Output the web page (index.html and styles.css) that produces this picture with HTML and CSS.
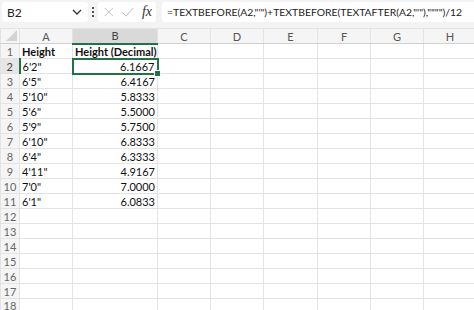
FILE: index.html
```html
<!DOCTYPE html>
<html lang="en">
<head>
    <meta charset="UTF-8">
    <title>Height to Decimal</title>
    <link rel="stylesheet" href="styles.css">
</head>
<body>

<!-- Formula Bar -->
<div class="formula-bar">
    <div class="name-box">
        <span class="name-text">B2</span>
        <svg class="chevron" width="10" height="6" viewBox="0 0 10 6"><path d="M1 1 L5 5 L9 1" fill="none" stroke="#333" stroke-width="1.3"/></svg>
    </div>
    <div class="dots"><span></span><span></span><span></span></div>
    <div class="fx-box">
        <svg width="14" height="14" viewBox="0 0 14 14"><path d="M2 2 L12 12 M12 2 L2 12" stroke="#bdbdbd" stroke-width="1.2"/></svg>
        <svg width="16" height="14" viewBox="0 0 16 14"><path d="M1 7 L6 12 L15 2" fill="none" stroke="#bdbdbd" stroke-width="1.2"/></svg>
        <span class="fx">fx</span>
    </div>
    <div class="formula-input">=TEXTBEFORE(A2,"'")+TEXTBEFORE(TEXTAFTER(A2,"'"),"""")/12</div>
</div>

<!-- Sheet -->
<table class="sheet">
    <colgroup>
        <col class="c-head"><col class="c-a"><col class="c-b"><col class="c-n"><col class="c-n"><col class="c-e"><col class="c-n"><col class="c-n"><col class="c-h">
    </colgroup>
    <tr class="col-heads">
        <th class="corner"><div class="tri"></div></th>
        <th>A</th><th class="sel">B</th><th>C</th><th>D</th><th>E</th><th>F</th><th>G</th><th>H</th>
    </tr>
    <tr><th>1</th><td class="bold">Height</td><td class="bold">Height (Decimal)</td><td></td><td></td><td></td><td></td><td></td><td></td></tr>
    <tr><th class="sel-row">2</th><td>6'2"</td><td class="num active">6.1667<span class="handle"></span></td><td></td><td></td><td></td><td></td><td></td><td></td></tr>
    <tr><th>3</th><td>6'5"</td><td class="num">6.4167</td><td></td><td></td><td></td><td></td><td></td><td></td></tr>
    <tr><th>4</th><td>5'10"</td><td class="num">5.8333</td><td></td><td></td><td></td><td></td><td></td><td></td></tr>
    <tr><th>5</th><td>5'6"</td><td class="num">5.5000</td><td></td><td></td><td></td><td></td><td></td><td></td></tr>
    <tr><th>6</th><td>5'9"</td><td class="num">5.7500</td><td></td><td></td><td></td><td></td><td></td><td></td></tr>
    <tr><th>7</th><td>6'10"</td><td class="num">6.8333</td><td></td><td></td><td></td><td></td><td></td><td></td></tr>
    <tr><th>8</th><td>6'4"</td><td class="num">6.3333</td><td></td><td></td><td></td><td></td><td></td><td></td></tr>
    <tr><th>9</th><td>4'11"</td><td class="num">4.9167</td><td></td><td></td><td></td><td></td><td></td><td></td></tr>
    <tr><th>10</th><td>7'0"</td><td class="num">7.0000</td><td></td><td></td><td></td><td></td><td></td><td></td></tr>
    <tr><th>11</th><td>6'1"</td><td class="num">6.0833</td><td></td><td></td><td></td><td></td><td></td><td></td></tr>
    <tr><th>12</th><td></td><td></td><td></td><td></td><td></td><td></td><td></td><td></td></tr>
    <tr><th>13</th><td></td><td></td><td></td><td></td><td></td><td></td><td></td><td></td></tr>
    <tr><th>14</th><td></td><td></td><td></td><td></td><td></td><td></td><td></td><td></td></tr>
    <tr><th>15</th><td></td><td></td><td></td><td></td><td></td><td></td><td></td><td></td></tr>
    <tr><th>16</th><td></td><td></td><td></td><td></td><td></td><td></td><td></td><td></td></tr>
    <tr><th>17</th><td></td><td></td><td></td><td></td><td></td><td></td><td></td><td></td></tr>
    <tr class="last"><th>18</th><td></td><td></td><td></td><td></td><td></td><td></td><td></td><td></td></tr>
</table>

</body>
</html>
```

FILE: styles.css
```css
body {
    margin: 0;
    padding: 0;
    font-family: Lato, "Open Sans", sans-serif;
    background-color: #fff;
    overflow: hidden;
    width: 474px;
    height: 310px;
}

.formula-bar {
    display: flex;
    align-items: center;
    height: 28px;
    padding: 0 0 0 2px;
    background-color: #f3f3f3;
    box-sizing: border-box;
}

.name-box {
    display: flex;
    align-items: center;
    justify-content: space-between;
    width: 86px;
    height: 20px;
    background-color: #fff;
    border-radius: 3px;
    padding: 0 6px 0 5px;
    box-sizing: border-box;
    margin-top: -4px;
}

.name-text {
    font-size: 12px;
    color: #222;
}

.dots {
    display: flex;
    flex-direction: column;
    gap: 2px;
    margin: -4px 0 0 0;
    width: 10px;
    align-items: center;
}

.dots span {
    width: 2px;
    height: 2px;
    background-color: #555;
}

.fx-box {
    display: flex;
    align-items: center;
    gap: 6px;
    width: 58px;
    height: 20px;
    background-color: #fff;
    border-radius: 3px;
    padding: 0 4px 0 5px;
    box-sizing: border-box;
    margin: -4px 0 0 0;
}

.fx {
    font-family: "Liberation Serif", serif;
    font-style: italic;
    font-size: 14px;
    color: #333;
    margin-left: 2px;
}

.formula-input {
    flex: 1;
    height: 20px;
    line-height: 20px;
    background-color: #fff;
    border-radius: 3px 0 0 3px;
    margin: -4px 0 0 6px;
    padding-left: 5px;
    font-size: 10.4px;
    color: #222;
    white-space: nowrap;
    overflow: hidden;
}

.sheet {
    border-collapse: collapse;
    table-layout: fixed;
    width: 476px;
    font-size: 11px;
}

.c-head { width: 19px; }
.c-a { width: 53px; }
.c-b { width: 85px; }
.c-n { width: 53px; }
.c-e { width: 54px; }
.c-h { width: 53px; }

.sheet th,
.sheet td {
    height: 15px;
    padding: 0 2px;
    border: 1px solid #e3e3e3;
    box-sizing: border-box;
    line-height: 13px;
    white-space: nowrap;
    overflow: hidden;
}

.sheet th {
    background-color: #f5f5f5;
    color: #666;
    font-weight: normal;
    text-align: center;
    padding: 0;
}

.col-heads th {
    color: #555;
    border-bottom-color: #d0d0d0;
}

.last th,
.last td {
    vertical-align: top;
}

.sheet th.sel {
    background-color: #d9d9d9;
    color: #444;
    border-bottom: 2px solid #217346;
}

.sheet th.sel-row {
    background-color: #e6e6e6;
    color: #444;
    border-right: 2px solid #217346;
}

.corner {
    position: relative;
}

.tri {
    position: absolute;
    right: 2px;
    bottom: 2px;
    width: 0;
    height: 0;
    border-left: 11px solid transparent;
    border-bottom: 11px solid #d3d3d3;
}

.sheet td {
    color: #111;
}

.bold {
    font-weight: bold;
}

.num {
    text-align: right;
}

.sheet td.active {
    position: relative;
    overflow: visible;
    border: 2px solid #217346;
}

.handle {
    position: absolute;
    right: -4px;
    bottom: -4px;
    width: 5px;
    height: 5px;
    background-color: #217346;
    border: 1px solid #fff;
}
```
